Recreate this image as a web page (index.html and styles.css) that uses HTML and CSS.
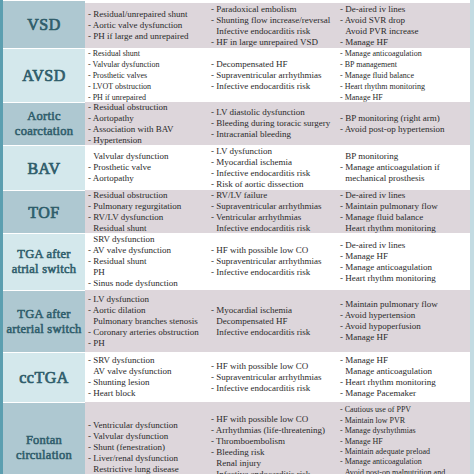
FILE: index.html
```html
<!DOCTYPE html>
<html>
<head>
<meta charset="utf-8">
<link rel="stylesheet" href="styles.css">
</head>
<body>
<div class="table">
  <!-- VSD -->
  <div class="label dark big">VSD</div>
  <div class="cell grey first">
    <div>- Residual/unrepaired shunt</div>
    <div>- Aortic valve dysfunction</div>
    <div>- PH if large and unrepaired</div>
  </div>
  <div class="cell grey first">
    <div>- Paradoxical embolism</div>
    <div>- Shunting flow increase/reversal</div>
    <div class="nd">Infective endocarditis risk</div>
    <div>- HF in large unrepaired VSD</div>
  </div>
  <div class="cell grey first">
    <div>- De-aired iv lines</div>
    <div>- Avoid SVR drop</div>
    <div class="nd">Avoid PVR increase</div>
    <div>- Manage HF</div>
  </div>

  <!-- AVSD -->
  <div class="label light big">AVSD</div>
  <div class="cell white small">
    <div>- Residual shunt</div>
    <div>- Valvular dysfunction</div>
    <div>- Prosthetic valves</div>
    <div>- LVOT obstruction</div>
    <div>- PH if unrepaired</div>
  </div>
  <div class="cell white">
    <div>- Decompensated HF</div>
    <div>- Supraventricular arrhythmias</div>
    <div>- Infective endocarditis risk</div>
  </div>
  <div class="cell white small">
    <div>- Manage anticoagulation</div>
    <div>- BP management</div>
    <div>- Manage fluid balance</div>
    <div>- Heart rhythm monitoring</div>
    <div>- Manage HF</div>
  </div>

  <!-- Aortic coarctation -->
  <div class="label dark">Aortic<br>coarctation</div>
  <div class="cell grey">
    <div>- Residual obstruction</div>
    <div>- Aortopathy</div>
    <div>- Association with BAV</div>
    <div>- Hypertension</div>
  </div>
  <div class="cell grey">
    <div>- LV diastolic dysfunction</div>
    <div>- Bleeding during toracic surgery</div>
    <div>- Intracranial bleeding</div>
  </div>
  <div class="cell grey">
    <div>- BP monitoring (right arm)</div>
    <div>- Avoid post-op hypertension</div>
  </div>

  <!-- BAV -->
  <div class="label light big">BAV</div>
  <div class="cell white">
    <div class="nd">Valvular dysfunction</div>
    <div>- Prosthetic valve</div>
    <div>- Aortopathy</div>
  </div>
  <div class="cell white">
    <div>- LV dysfunction</div>
    <div>- Myocardial ischemia</div>
    <div>- Infective endocarditis risk</div>
    <div>- Risk of aortic dissection</div>
  </div>
  <div class="cell white">
    <div class="nd">BP monitoring</div>
    <div>- Manage anticoagulation if</div>
    <div class="nd">mechanical prosthesis</div>
  </div>

  <!-- TOF -->
  <div class="label dark big">TOF</div>
  <div class="cell grey">
    <div>- Residual obstruction</div>
    <div>- Pulmonary regurgitation</div>
    <div>- RV/LV dysfunction</div>
    <div class="nd">Residual shunt</div>
  </div>
  <div class="cell grey">
    <div>- RV/LV failure</div>
    <div>- Supraventricular arrhythmias</div>
    <div>- Ventricular arrhythmias</div>
    <div class="nd">Infective endocarditis risk</div>
  </div>
  <div class="cell grey">
    <div>- De-aired iv lines</div>
    <div>- Maintain pulmonary flow</div>
    <div>- Manage fluid balance</div>
    <div class="nd">Heart rhythm monitoring</div>
  </div>

  <!-- TGA after atrial switch -->
  <div class="label light">TGA after<br>atrial switch</div>
  <div class="cell white">
    <div class="nd">SRV dysfunction</div>
    <div>- AV valve dysfunction</div>
    <div>- Residual shunt</div>
    <div class="nd">PH</div>
    <div>- Sinus node dysfunction</div>
  </div>
  <div class="cell white">
    <div>- HF with possible low CO</div>
    <div>- Supraventricular arrhythmias</div>
    <div>- Infective endocarditis risk</div>
  </div>
  <div class="cell white">
    <div>- De-aired iv lines</div>
    <div>- Manage HF</div>
    <div>- Manage anticoagulation</div>
    <div>- Heart rhythm monitoring</div>
  </div>

  <!-- TGA after arterial switch -->
  <div class="label dark">TGA after<br>arterial switch</div>
  <div class="cell grey">
    <div>- LV dysfunction</div>
    <div>- Aortic dilation</div>
    <div class="nd">Pulmonary branches stenosis</div>
    <div>- Coronary arteries obstruction</div>
    <div>- PH</div>
  </div>
  <div class="cell grey">
    <div>- Myocardial ischemia</div>
    <div class="nd">Decompensated HF</div>
    <div class="nd">Infective endocarditis risk</div>
  </div>
  <div class="cell grey">
    <div>- Maintain pulmonary flow</div>
    <div>- Avoid hypertension</div>
    <div>- Avoid hypoperfusion</div>
    <div>- Manage HF</div>
  </div>

  <!-- ccTGA -->
  <div class="label light big">ccTGA</div>
  <div class="cell white">
    <div>- SRV dysfunction</div>
    <div class="nd">AV valve dysfunction</div>
    <div>- Shunting lesion</div>
    <div>- Heart block</div>
  </div>
  <div class="cell white">
    <div>- HF with possible low CO</div>
    <div>- Supraventricular arrhythmias</div>
    <div>- Infective endocarditis risk</div>
  </div>
  <div class="cell white">
    <div>- Manage HF</div>
    <div class="nd">Manage anticoagulation</div>
    <div>- Heart rhythm monitoring</div>
    <div>- Manage Pacemaker</div>
  </div>

  <!-- Fontan circulation -->
  <div class="label dark">Fontan<br>circulation</div>
  <div class="cell grey">
    <div>- Ventricular dysfunction</div>
    <div>- Valvular dysfunction</div>
    <div>- Shunt (fenestration)</div>
    <div>- Liver/renal dysfunction</div>
    <div class="nd">Restrictive lung disease</div>
  </div>
  <div class="cell grey">
    <div>- HF with possible low CO</div>
    <div>- Arrhythmias (life-threatening)</div>
    <div>- Thromboembolism</div>
    <div>- Bleeding risk</div>
    <div class="nd">Renal injury</div>
    <div>- Infective endocarditis risk</div>
  </div>
  <div class="cell grey small tight">
    <div>- Cautious use of PPV</div>
    <div>- Maintain low PVR</div>
    <div>- Manage dysrhythmias</div>
    <div>- Manage HF</div>
    <div>- Maintain adequate preload</div>
    <div>- Manage anticoagulation</div>
    <div class="nd">Avoid post-op malnutrition and</div>
    <div class="nd">hypothermia</div>
  </div>
</div>
</body>
</html>
```

FILE: styles.css
```css
html, body {
  margin: 0;
  padding: 0;
  background: #ffffff;
}
body {
  width: 474px;
  height: 474px;
  overflow: hidden;
}
.table {
  display: grid;
  grid-template-columns: 82px 123px 129px 133px;
  grid-template-rows: 48px 54px 43px 45px 43px 57px 62px 50px 90px;
  border-left: 3px solid #5c9fb0;
  border-right: 4px solid #c3dbe2;
  width: 467px;
  font-family: "Liberation Serif", "Times New Roman", serif;
  color: #2a2a2a;
}
.label {
  display: flex;
  align-items: center;
  justify-content: center;
  text-align: center;
  font-family: "Liberation Serif", serif;
  font-weight: normal;
  -webkit-text-stroke: 0.55px #2f5d6b;
  font-size: 12.5px;
  line-height: 15px;
  letter-spacing: 0.25px;
  color: #2f5d6b;
  border-top: 1px solid #ffffff;
  white-space: nowrap;
}
.label.big {
  font-size: 16px;
  letter-spacing: 0.5px;
  -webkit-text-stroke: 0.7px #2f5d6b;
}
.dark {
  background: #aec8d1;
}
.light {
  background: #d4e8ec;
}
.cell {
  display: flex;
  flex-direction: column;
  justify-content: center;
  padding-left: 3px;
  font-size: 9px;
  line-height: 11px;
  white-space: nowrap;
  overflow: hidden;
}
.cell.small {
  font-size: 8px;
}
.cell.tight {
  line-height: 10.4px;
}
.grey {
  background: #ddd6db;
}
.white {
  background: #ffffff;
}
.first {
  border-top: 3px solid #ffffff;
}
.nd {
  padding-left: 0.58em;
}
```
